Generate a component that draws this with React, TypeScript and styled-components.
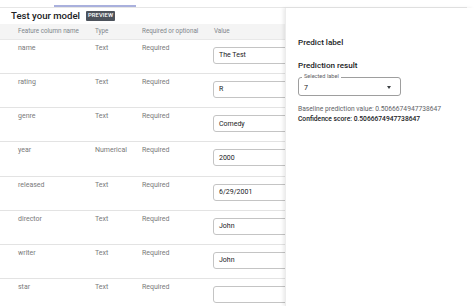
import React from 'react';
import styled, { createGlobalStyle } from 'styled-components';

const GlobalStyle = createGlobalStyle`
  html, body {
    margin: 0;
    padding: 0;
    background: #ffffff;
    font-family: Roboto, "Liberation Sans", Arial, sans-serif;
    color: #202124;
  }
  * { box-sizing: border-box; }
`;

const Page = styled.div`
  width: 474px;
  height: 306px;
  overflow: hidden;
  display: flex;
  flex-direction: column;
`;

const TabBar = styled.div`
  height: 8px;
  width: 467px;
  flex-shrink: 0;
  display: flex;
  align-items: flex-end;
  border-bottom: 1px solid #e6e6e6;
  padding-left: 54px;
`;

const TabIndicator = styled.div`
  width: 82px;
  height: 2px;
  background: #a9b0dd;
`;

const Body = styled.div`
  flex: 1;
  display: flex;
  min-height: 0;
`;

const LeftPane = styled.div`
  width: 285px;
  flex-shrink: 0;
  overflow: hidden;
  display: flex;
  flex-direction: column;
`;

const TitleRow = styled.div`
  display: flex;
  align-items: center;
  gap: 6px;
  height: 17px;
  padding-left: 11px;
  margin-top: 3px;
`;

const Title = styled.h1`
  margin: 0;
  font-size: 9.6px;
  font-weight: 500;
  color: #202124;
  line-height: 1;
`;

const Badge = styled.span`
  background: #4d535c;
  color: #ffffff;
  font-size: 5.8px;
  font-weight: 500;
  padding: 2px 2px;
  border-radius: 1px;
  letter-spacing: 0.1px;
  line-height: 1;
`;

const Table = styled.div`
  width: 300px;
  margin-top: 3px;
`;

const Columns = `
  display: grid;
  grid-template-columns: 77px 47px 72px 1fr;
  padding-left: 18px;
`;

const HeaderRow = styled.div`
  ${Columns}
  height: 16px;
  align-items: center;
  background: #f4f4f4;
  border-bottom: 1px solid #e8e8e8;
  font-size: 6.3px;
  color: #80868b;
`;

const Row = styled.div`
  ${Columns}
  height: 34.2px;
  border-bottom: 1px solid #e3e3e3;
  font-size: 7px;
  color: #7a7a7a;
`;

const Cell = styled.div`
  padding-top: 4px;
`;

const ValueInput = styled.div`
  margin-top: 7px;
  margin-left: -1px;
  height: 17px;
  border: 1px solid #c4c4c4;
  border-radius: 3px;
  padding-left: 5px;
  display: flex;
  align-items: center;
  font-size: 7px;
  color: #202124;
`;

const RightPane = styled.div`
  flex: 1;
  position: relative;
  padding: 29px 0 0 12px;
  box-shadow: -2px 0 3px rgba(0, 0, 0, 0.08);
  border-left: 1px solid #ececec;
  background: #ffffff;
`;

const SectionTitle = styled.div<{ $gap: number }>`
  font-size: 8.1px;
  font-weight: 500;
  color: #202124;
  margin-bottom: ${(p) => p.$gap}px;
`;

const SelectBox = styled.div`
  position: relative;
  width: 103px;
  height: 19px;
  border: 1px solid #9e9e9e;
  border-radius: 3px;
  display: flex;
  align-items: center;
  justify-content: space-between;
  padding: 2px 9px 0 5px;
  font-size: 7px;
  color: #202124;
  margin-bottom: 8px;
`;

const FloatingLabel = styled.span`
  position: absolute;
  left: 3px;
  top: -5px;
  padding: 0 2px;
  background: #ffffff;
  font-size: 5.6px;
  color: #5f6368;
  line-height: 1.2;
`;

const Caret = styled.span`
  width: 0;
  height: 0;
  border-left: 2.5px solid transparent;
  border-right: 2.5px solid transparent;
  border-top: 3px solid #3c4043;
`;

const ResultLine = styled.div<{ $strong?: boolean }>`
  font-size: 6.7px;
  line-height: 10px;
  font-weight: ${(p) => (p.$strong ? 500 : 400)};
  color: ${(p) => (p.$strong ? '#202124' : '#5f6368')};
`;

const features = [
  { name: 'name', type: 'Text', value: 'The Test' },
  { name: 'rating', type: 'Text', value: 'R' },
  { name: 'genre', type: 'Text', value: 'Comedy' },
  { name: 'year', type: 'Numerical', value: '2000' },
  { name: 'released', type: 'Text', value: '6/29/2001' },
  { name: 'director', type: 'Text', value: 'John' },
  { name: 'writer', type: 'Text', value: 'John' },
  { name: 'star', type: 'Text', value: '' },
];

const App: React.FC = () => {
  return (
    <>
      <GlobalStyle />
      <Page>
        <TabBar>
          <TabIndicator />
        </TabBar>
        <Body>
          <LeftPane>
            <TitleRow>
              <Title>Test your model</Title>
              <Badge>PREVIEW</Badge>
            </TitleRow>
            <Table>
              <HeaderRow>
                <div>Feature column name</div>
                <div>Type</div>
                <div>Required or optional</div>
                <div>Value</div>
              </HeaderRow>
              {features.map((f) => (
                <Row key={f.name}>
                  <Cell>{f.name}</Cell>
                  <Cell>{f.type}</Cell>
                  <Cell>Required</Cell>
                  <div>
                    <ValueInput>{f.value}</ValueInput>
                  </div>
                </Row>
              ))}
            </Table>
          </LeftPane>
          <RightPane>
            <SectionTitle $gap={13}>Predict label</SectionTitle>
            <SectionTitle $gap={7}>Prediction result</SectionTitle>
            <SelectBox>
              <FloatingLabel>Selected label</FloatingLabel>
              <span>7</span>
              <Caret />
            </SelectBox>
            <ResultLine>Baseline prediction value: 0.5066674947738647</ResultLine>
            <ResultLine $strong>Confidence score: 0.5066674947738647</ResultLine>
          </RightPane>
        </Body>
      </Page>
    </>
  );
};

export default App;
